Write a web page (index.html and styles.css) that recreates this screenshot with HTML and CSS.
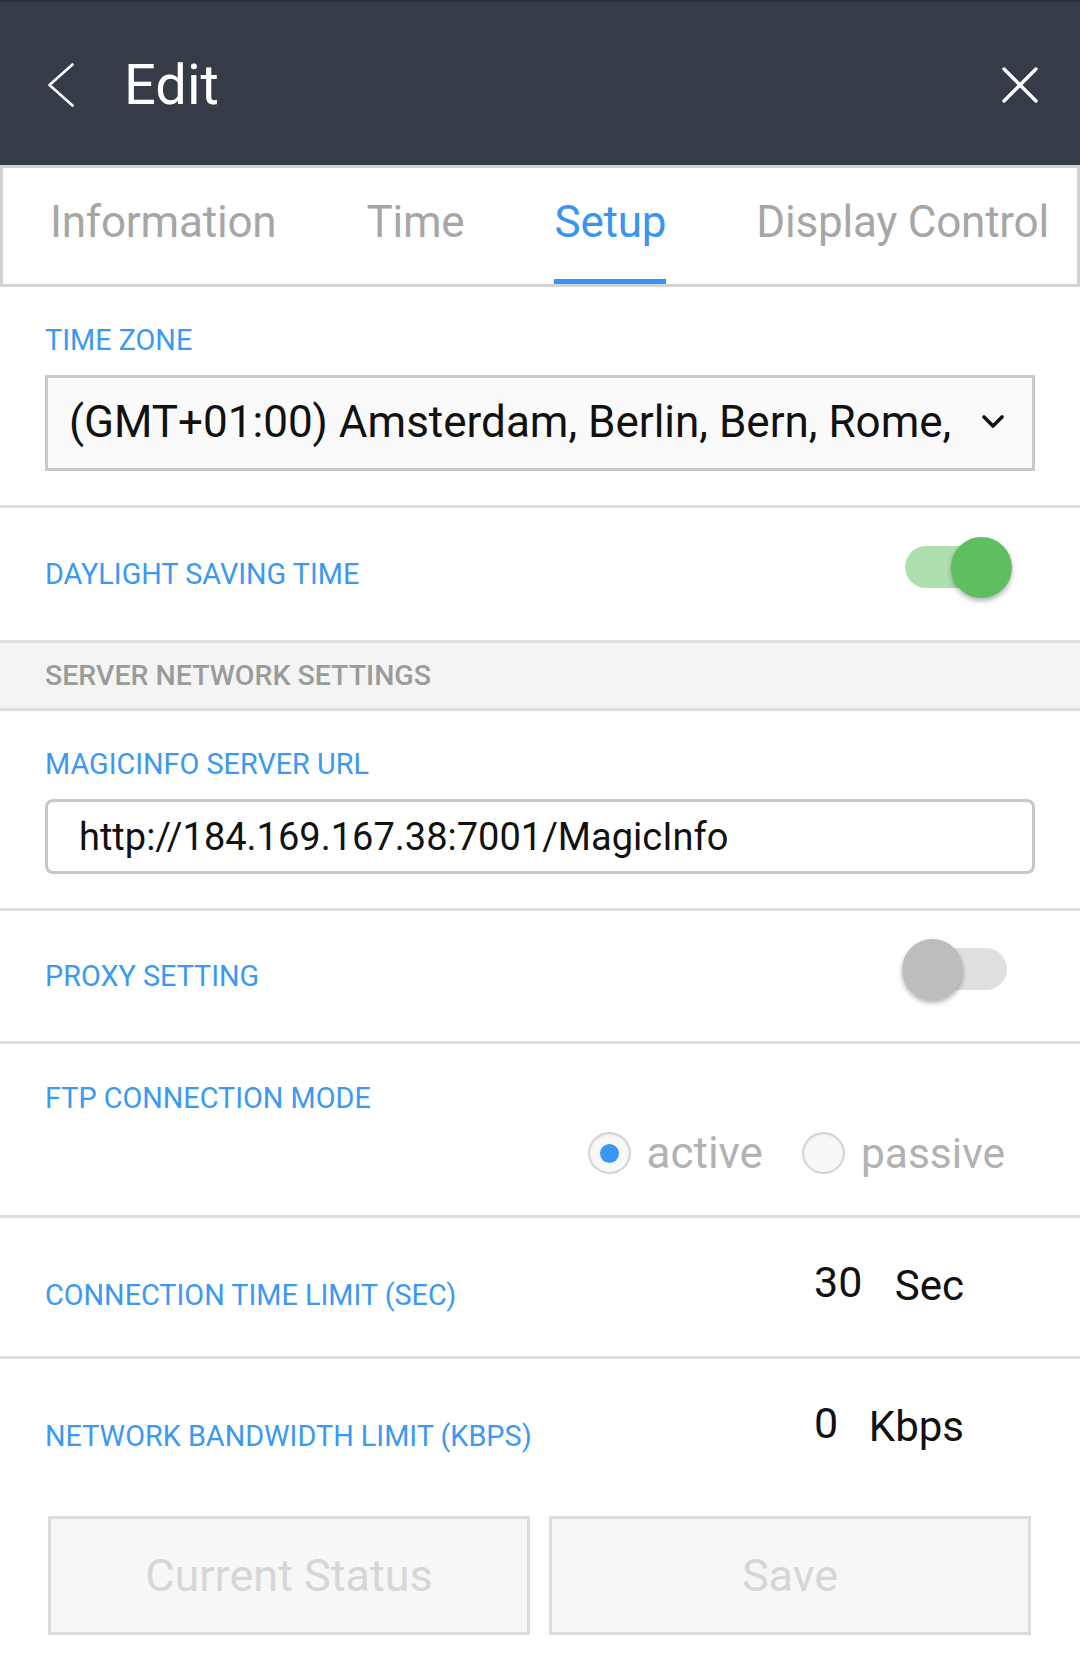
FILE: index.html
```html
<!DOCTYPE html>
<html>

<head>
    <meta charset="UTF-8">
    <meta name="viewport" content="width=device-width, initial-scale=1.0">
    <title>Edit</title>
    <link rel="stylesheet" href="styles.css">
</head>

<body>
    <!-- top bar -->
    <header class="topbar">
        <svg class="back" width="26" height="44" viewBox="0 0 26 44">
            <polyline points="24.5,1.5 1.5,22 24.5,42.5" fill="none" stroke="#fff" stroke-width="2.6" stroke-linecap="round" stroke-linejoin="round" />
        </svg>
        <h1>Edit</h1>
        <svg class="close" width="36" height="36" viewBox="0 0 36 36">
            <line x1="2" y1="2" x2="34" y2="34" stroke="#fff" stroke-width="3.4" stroke-linecap="round" />
            <line x1="34" y1="2" x2="2" y2="34" stroke="#fff" stroke-width="3.4" stroke-linecap="round" />
        </svg>
    </header>

    <nav class="tabs">
        <span class="tab">Information</span>
        <span class="tab">Time</span>
        <span class="tab active">Setup</span>
        <span class="tab">Display Control</span>
    </nav>

    <section class="field">
        <div class="label">TIME ZONE</div>
        <div class="select">
            <span>(GMT+01:00) Amsterdam, Berlin, Bern, Rome,</span>
            <svg width="24" height="16" viewBox="0 0 24 16">
                <polyline points="3,3 12,12 21,3" fill="none" stroke="#111" stroke-width="3.6" stroke-linecap="round" stroke-linejoin="round" />
            </svg>
        </div>
    </section>

    <section class="row">
        <div class="label">DAYLIGHT SAVING TIME</div>
        <div class="switch on"><span class="track"></span><span class="knob"></span></div>
    </section>

    <div class="group-title">SERVER NETWORK SETTINGS</div>

    <section class="field">
        <div class="label">MAGICINFO SERVER URL</div>
        <div class="input">http://184.169.167.38:7001/MagicInfo</div>
    </section>

    <section class="row proxy">
        <div class="label">PROXY SETTING</div>
        <div class="switch"><span class="track"></span><span class="knob"></span></div>
    </section>

    <section class="field ftp">
        <div class="label">FTP CONNECTION MODE</div>
        <div class="radios">
            <span class="radio checked"></span><span class="radio-text">active</span>
            <span class="radio"></span><span class="radio-text">passive</span>
        </div>
    </section>

    <section class="limit">
        <div class="label">CONNECTION TIME LIMIT (SEC)</div>
        <div class="value"><span class="num">30</span><span class="unit">Sec</span></div>
    </section>

    <section class="limit last">
        <div class="label">NETWORK BANDWIDTH LIMIT (KBPS)</div>
        <div class="value"><span class="num">0</span><span class="unit">Kbps</span></div>
    </section>

    <div class="buttons">
        <button>Current Status</button>
        <button>Save</button>
    </div>
</body>

</html>
```

FILE: styles.css
```css
* {
    margin: 0;
    padding: 0;
    box-sizing: border-box;
}
body {
    width: 1080px;
    min-height: 1680px;
    background: #fff;
    font-family: Roboto, "Noto Sans", sans-serif;
    color: #111;
}

/* header */
.topbar {
    height: 165px;
    display: flex;
    align-items: center;
    padding: 3px 42px 0 48px;
    background: #353b47;
    border-top: 2px solid #2a2f38;
}
.topbar h1 {
    margin-left: 50px;
    font-size: 56px;
    font-weight: 400;
    line-height: 1;
    color: #fff;
}
.topbar .close {
    margin-left: auto;
}

/* tabs */
.tabs {
    height: 122px;
    display: flex;
    gap: 90px;
    padding: 0 0 8px 47px;
    border: 3px solid #d2d2d2;
    overflow: hidden;
    white-space: nowrap;
}
.tab {
    display: flex;
    align-items: center;
    font-size: 44px;
    line-height: 1;
    letter-spacing: -0.2px;
    color: #a6a6a6;
}
.tab.active {
    color: #3a94f2;
    box-shadow: inset 0 -5px 0 #3595f7;
    margin-bottom: -8px;
    padding-bottom: 8px;
}

/* common */
.label {
    font-size: 28.8px;
    line-height: 34px;
    color: #3b98f3;
    white-space: nowrap;
}
.field {
    padding: 36px 45px 34px;
    border-bottom: 3px solid #dedede;
}
.select {
    margin-top: 18px;
    height: 96px;
    display: flex;
    align-items: center;
    justify-content: space-between;
    padding: 0 27px 3px 21px;
    border: 3px solid #c9c9c9;
    background: #fafafa;
    font-size: 44px;
    white-space: nowrap;
}
.input {
    margin-top: 18px;
    height: 75px;
    display: flex;
    align-items: center;
    padding-left: 31px;
    border: 3px solid #c8c8c8;
    border-radius: 8px;
    font-size: 38px;
}

/* rows with switch */
.row {
    height: 135px;
    display: flex;
    align-items: center;
    justify-content: space-between;
    padding: 0 69px 0 45px;
    border-bottom: 3px solid #dedede;
}
.row.proxy {
    height: 133px;
}
.switch {
    position: relative;
    width: 109px;
    height: 60px;
    margin-bottom: 14px;
}
.switch .track {
    position: absolute;
    left: 3px;
    top: 9px;
    width: 102px;
    height: 42px;
    border-radius: 21px;
    background: #e0e0e0;
}
.switch .knob {
    position: absolute;
    left: 0;
    top: 0;
    width: 61px;
    height: 61px;
    border-radius: 50%;
    background: #bdbdbd;
    box-shadow: 0 3px 5px rgba(0, 0, 0, 0.3);
}
.switch.on .track {
    background: #aedfae;
    width: 96px;
}
.switch.on .knob {
    left: 49px;
    background: #5fbe60;
}

.group-title {
    height: 68px;
    display: flex;
    align-items: center;
    padding-left: 45px;
    background: #f4f4f4;
    border-bottom: 3px solid #dedede;
    font-size: 28.5px;
    font-weight: 500;
    color: #9b9b9b;
}

/* ftp radios */
.ftp {
    padding: 37px 45px 37px;
}
.radios {
    margin-top: 13px;
    height: 50px;
    display: flex;
    align-items: center;
    justify-content: flex-end;
    padding-right: 30px;
}
.radio {
    width: 43px;
    height: 42px;
    border-radius: 50%;
    border: 2px solid #d4d4d4;
    background: #f8f8f8;
    box-shadow: inset 0 1px 2px rgba(0, 0, 0, 0.08);
    display: flex;
    align-items: center;
    justify-content: center;
}
.radio.checked::after {
    content: "";
    width: 19px;
    height: 19px;
    border-radius: 50%;
    background: #3a96f5;
}
.radio-text {
    margin: 0 39px 0 16px;
    font-size: 44px;
    color: #b2b2b2;
}
.radio-text:last-child {
    margin-right: 0;
    font-size: 42.5px;
}

/* limits */
.limit {
    height: 141px;
    display: flex;
    align-items: flex-start;
    justify-content: space-between;
    padding: 0 116px 0 45px;
    border-bottom: 3px solid #dedede;
}
.limit .label {
    margin-top: 60px;
}
.limit .value {
    margin-top: 43px;
    width: 150px;
    display: flex;
    align-items: flex-start;
    justify-content: space-between;
}
.num {
    font-size: 43px;
    line-height: 42px;
}
.unit {
    font-size: 42px;
    line-height: 50px;
}
.limit.last {
    height: 157px;
    border-bottom: 0;
}

/* bottom buttons */
.buttons {
    display: flex;
    gap: 19px;
    padding: 0 49px 0 48px;
}
button {
    flex: 1;
    height: 119px;
    border: 3px solid #dcdcdc;
    background: #f7f7f7;
    font-family: Roboto, "Noto Sans", sans-serif;
    font-size: 45px;
    color: #d6d6d6;
}
```
